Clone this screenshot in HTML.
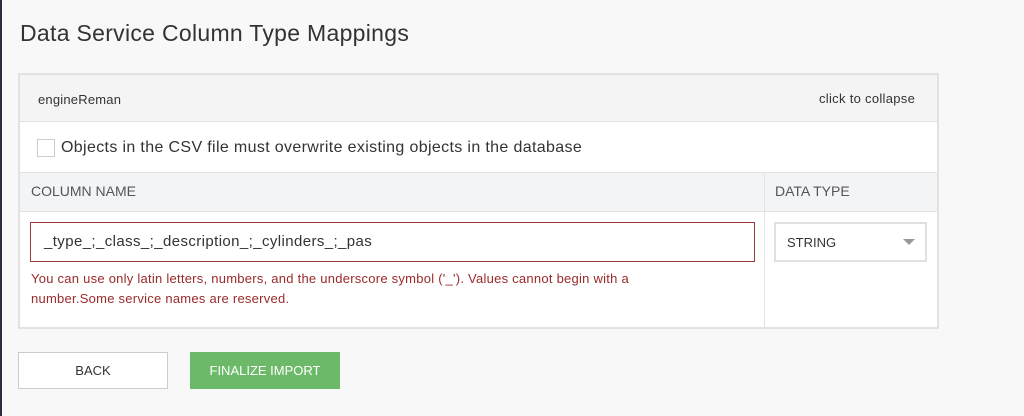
<!DOCTYPE html>
<html><head><style>
body{margin:0;width:1024px;height:416px;background:#f8f8f8;font-family:"Liberation Sans",sans-serif;position:relative;overflow:hidden;color:#333}
.a{position:absolute;box-sizing:border-box}
</style></head><body>
<div class="a" style="left:0;top:0;width:2px;height:416px;background:#2a2d3a"></div>
<div class="a" style="left:20px;top:20px;font-size:23px;color:#333;letter-spacing:0.3px">Data Service Column Type Mappings</div>
<div class="a" style="left:18px;top:73px;width:921px;height:256px;border:2px solid #e2e2e2;background:#fff"></div>
<div class="a" style="left:20px;top:75px;width:917px;height:47px;background:#f4f4f5;border-bottom:1px solid #e2e2e2"></div>
<div class="a" style="left:38px;top:92px;font-size:13px;letter-spacing:0.2px">engineReman</div>
<div class="a" style="left:819px;top:91px;font-size:13px;letter-spacing:0.3px">click to collapse</div>
<div class="a" style="left:37px;top:139px;width:18px;height:18px;border:1px solid #ccc;background:#fff"></div>
<div class="a" style="left:61px;top:139px;font-size:16px;letter-spacing:0.35px">Objects in the CSV file must overwrite existing objects in the database</div>
<div class="a" style="left:20px;top:172px;width:917px;height:40px;background:#f3f4f6;border-top:1px solid #e2e2e2;border-bottom:1px solid #e2e2e2"></div>
<div class="a" style="left:764px;top:172px;width:1px;height:155px;background:#e2e2e2"></div>
<div class="a" style="left:31px;top:183px;font-size:14px;color:#555">COLUMN NAME</div>
<div class="a" style="left:775px;top:183px;font-size:14px;color:#555">DATA TYPE</div>
<div class="a" style="left:30px;top:222px;width:725px;height:40px;border:1px solid #9b3a3a;background:#fff"></div>
<div class="a" style="left:44px;top:233px;font-size:15px;color:#333;letter-spacing:0.4px">_type_;_class_;_description_;_cylinders_;_pas</div>
<div class="a" style="left:774px;top:222px;width:153px;height:40px;border:2px solid #e0e0e0;background:#fff"></div>
<div class="a" style="left:787px;top:235px;font-size:13px">STRING</div>
<div class="a" style="left:903px;top:239px;width:0;height:0;border-left:6px solid transparent;border-right:6px solid transparent;border-top:6px solid #999"></div>
<div class="a" style="left:31px;top:269px;width:675px;font-size:13px;line-height:20px;color:#9b2a2a;letter-spacing:0.25px">You can use only latin letters, numbers, and the underscore symbol ('_'). Values cannot begin with a number.Some service names are reserved.</div>
<div class="a" style="left:18px;top:352px;width:150px;height:37px;border:1px solid #ccc;background:#fff;font-size:13px;text-align:center;line-height:35px">BACK</div>
<div class="a" style="left:190px;top:352px;width:150px;height:37px;background:#6cb96a;color:#fff;font-size:13px;text-align:center;line-height:37px">FINALIZE IMPORT</div>
</body></html>
